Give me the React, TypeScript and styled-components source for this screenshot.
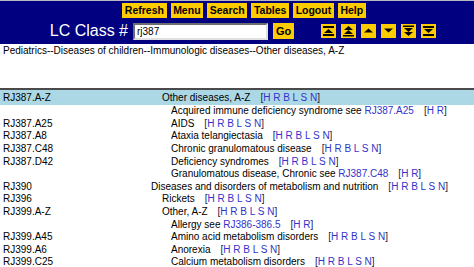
import React from "react";
import styled, { createGlobalStyle } from "styled-components";

const GlobalStyle = createGlobalStyle`
  html, body {
    margin: 0;
    padding: 0;
    background: #ffffff;
    font-family: "Liberation Sans", Arial, sans-serif;
  }
`;

const Header = styled.div`
  background: #000080;
  border-top: 1px solid #b8b8c0;
  padding: 2px 0 4px;
  display: flex;
  flex-direction: column;
  align-items: center;
  gap: 4px;
`;

const ButtonRow = styled.div`
  display: flex;
  gap: 4px;
  padding-left: 14px;
`;

const NavButton = styled.span`
  background: #ffcc00;
  color: #000000;
  font-family: "Liberation Sans", Arial, sans-serif;
  font-weight: bold;
  font-size: 10.5px;
  height: 15px;
  line-height: 15px;
  padding: 0 2.6px;
`;

const SearchRow = styled.div`
  display: flex;
  align-items: center;
  padding-left: 12px;
`;

const Label = styled.span`
  color: #ffffff;
  font-size: 16px;
  margin-right: 5px;
`;

const Field = styled.div`
  width: 129px;
  height: 13px;
  background: #ffffff;
  border: 2px solid;
  border-color: #6e6e6e #e0e0e0 #e0e0e0 #6e6e6e;
  font-size: 10px;
  line-height: 13px;
  padding-left: 2px;
  color: #000000;
`;

const GoButton = styled(NavButton)`
  margin-left: 5px;
  height: 16px;
  line-height: 16px;
  padding: 0 3px;
  font-size: 11px;
`;

const ArrowGroup = styled.div`
  display: flex;
  gap: 5px;
  margin-left: 27px;
`;

const ArrowBox = styled.div`
  width: 15px;
  height: 14px;
  background: #ffcc00;
  display: flex;
  align-items: center;
  justify-content: center;
`;

const Content = styled.div`
  padding: 1px 0 0;
`;

const Breadcrumb = styled.div`
  font-size: 10px;
  line-height: 12.6px;
  padding-left: 3px;
  color: #000000;
`;

const Table = styled.div`
  margin-top: 30px;
  border-top: 2px solid #4a4a4a;
`;

const Row = styled.div<{ $hi?: boolean }>`
  display: flex;
  font-size: 10px;
  line-height: 12.6px;
  color: #000000;
  white-space: nowrap;
  background: ${({ $hi }) => ($hi ? "#acd8e6" : "transparent")};
  padding: ${({ $hi }) => ($hi ? "2px 0 1px" : "0")};
`;

const ClassCell = styled.div`
  width: 148px;
  padding-left: 3px;
  flex-shrink: 0;
`;

const Caption = styled.div<{ $level: number }>`
  padding-left: ${({ $level }) => [0, 11, 20][$level]}px;
`;

const Link = styled.span`
  color: #3333cc;
`;

const Brackets = styled.span`
  margin-left: 10px;
  color: #1a1a3a;
`;

type Dir = "top" | "dup" | "up" | "down" | "ddown" | "bottom";

function Arrow({ dir }: { dir: Dir }) {
  const up = (y: number) => `M3 ${y + 4} L7.5 ${y} L12 ${y + 4} Z`;
  const down = (y: number) => `M3 ${y} L7.5 ${y + 4} L12 ${y} Z`;
  let d = "";
  if (dir === "top") d = `M2 2 H13 V4 H2 Z ${up(5)} M2 10 H13 V12 H2 Z`;
  if (dir === "dup") d = `${up(2)} ${up(6)} M2 11 H13 V12.5 H2 Z`;
  if (dir === "up") d = up(4.5);
  if (dir === "down") d = down(4.5);
  if (dir === "ddown") d = `M2 1.5 H13 V3 H2 Z ${down(4)} ${down(8)}`;
  if (dir === "bottom") d = `M2 2 H13 V4 H2 Z ${down(5)} M2 10 H13 V12 H2 Z`;
  return (
    <ArrowBox>
      <svg width="15" height="14" viewBox="0 0 15 14">
        <path d={d} fill="#000000" />
      </svg>
    </ArrowBox>
  );
}

const HRBLSN = () => (
  <Brackets>
    [<Link>H R B L S N</Link>]
  </Brackets>
);
const HR = () => (
  <Brackets>
    [<Link>H R</Link>]
  </Brackets>
);

type Entry = {
  cls?: string;
  level: number;
  text: string;
  see?: string;
  full?: boolean;
  hi?: boolean;
};

const entries: Entry[] = [
  { cls: "RJ387.A-Z", level: 1, text: "Other diseases, A-Z", full: true, hi: true },
  { level: 2, text: "Acquired immune deficiency syndrome see ", see: "RJ387.A25" },
  { cls: "RJ387.A25", level: 2, text: "AIDS", full: true },
  { cls: "RJ387.A8", level: 2, text: "Ataxia telangiectasia", full: true },
  { cls: "RJ387.C48", level: 2, text: "Chronic granulomatous disease", full: true },
  { cls: "RJ387.D42", level: 2, text: "Deficiency syndromes", full: true },
  { level: 2, text: "Granulomatous disease, Chronic see ", see: "RJ387.C48" },
  { cls: "RJ390", level: 0, text: "Diseases and disorders of metabolism and nutrition", full: true },
  { cls: "RJ396", level: 1, text: "Rickets", full: true },
  { cls: "RJ399.A-Z", level: 1, text: "Other, A-Z", full: true },
  { level: 2, text: "Allergy see ", see: "RJ386-386.5" },
  { cls: "RJ399.A45", level: 2, text: "Amino acid metabolism disorders", full: true },
  { cls: "RJ399.A6", level: 2, text: "Anorexia", full: true },
  { cls: "RJ399.C25", level: 2, text: "Calcium metabolism disorders", full: true },
];

export default function App() {
  return (
    <>
      <GlobalStyle />
      <Header>
        <ButtonRow>
          {["Refresh", "Menu", "Search", "Tables", "Logout", "Help"].map((b) => (
            <NavButton key={b}>{b}</NavButton>
          ))}
        </ButtonRow>
        <SearchRow>
          <Label>LC Class #</Label>
          <Field>rj387</Field>
          <GoButton>Go</GoButton>
          <ArrowGroup>
            {(["top", "dup", "up", "down", "ddown", "bottom"] as Dir[]).map((d) => (
              <Arrow key={d} dir={d} />
            ))}
          </ArrowGroup>
        </SearchRow>
      </Header>
      <Content>
        <Breadcrumb>
          Pediatrics--Diseases of children--Immunologic diseases--Other diseases, A-Z
        </Breadcrumb>
        <Table>
          {entries.map((e, i) => (
            <Row key={i} $hi={e.hi}>
              <ClassCell>{e.cls}</ClassCell>
              <Caption $level={e.level}>
                {e.text}
                {e.see && <Link>{e.see}</Link>}
                {e.see ? <HR /> : e.full ? <HRBLSN /> : null}
              </Caption>
            </Row>
          ))}
        </Table>
      </Content>
    </>
  );
}
